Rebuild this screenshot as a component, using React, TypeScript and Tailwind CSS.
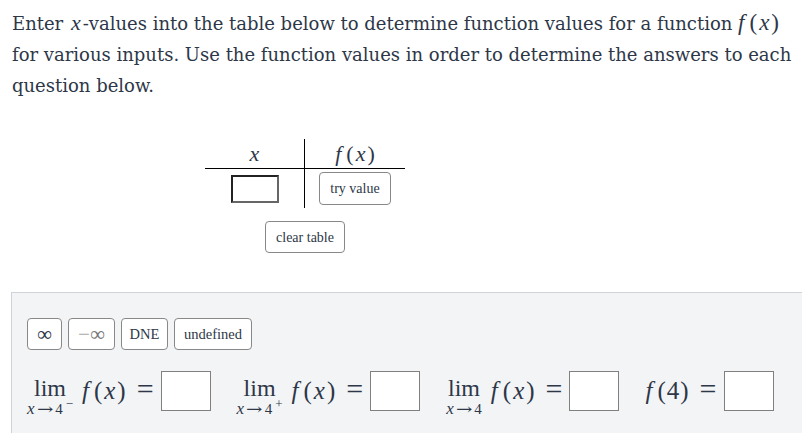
import React from "react";

const SERIF = "font-['Liberation_Serif',serif]";
const BODY = "font-['DejaVu_Serif',serif]";

function MathX() {
  return <span className={`${SERIF} italic text-[22px] leading-none px-[2px]`}>x</span>;
}

function Fx({ arg = "x", className = "" }: { arg?: string; className?: string }) {
  return (
    <span className={`${SERIF} whitespace-nowrap ${className}`}>
      <span className="italic">f</span>
      <span className="ml-[5px]">(</span>
      {arg === "x" ? <span className="italic px-[2px]">x</span> : <span className="px-[1px]">{arg}</span>}
      <span>)</span>
    </span>
  );
}

function AnswerBox() {
  return <input className="w-[50px] h-[40px] shrink-0 bg-white border border-[#808080] outline-none" />;
}

function Limit({ sup }: { sup?: string }) {
  return (
    <span className="flex flex-col items-center mt-[6px]">
      <span className="text-[24px] leading-[23px]">lim</span>
      <span className="flex items-baseline mt-[1px] text-[15px] leading-[15px] whitespace-nowrap">
        <span className="italic text-[17px] leading-[15px]">x</span>
        <span className="inline-block font-['DejaVu_Serif',serif] text-[15px] leading-[15px] mx-[4px] scale-x-[1.3]">
          →
        </span>
        <span>4</span>
        {sup && <span className="text-[13px] leading-[13px] relative -top-[6px] ml-[3px]">{sup}</span>}
      </span>
    </span>
  );
}

function Equation({ limit, sup, arg = "x" }: { limit: boolean; sup?: string; arg?: string }) {
  return (
    <div className="flex items-start">
      {limit && <Limit sup={sup} />}
      <span className={`h-[35px] leading-[35px] text-[25px] whitespace-nowrap ${limit ? "ml-[9px]" : ""}`}>
        <Fx arg={arg} />
        <span className="text-[30px] ml-[11px] mr-[7px]">=</span>
      </span>
      <AnswerBox />
    </div>
  );
}

const CHOICES = [
  { label: "∞", w: "w-[35px]" },
  { label: "−∞", w: "w-[47px]" },
  { label: "DNE", w: "w-[47px]" },
  { label: "undefined", w: "w-[78px]" },
];

export default function App() {
  return (
    <div className={`${SERIF} text-[#2d3748] bg-white w-[802px] h-[433px] overflow-hidden`}>
      <p className={`${BODY} pl-3 pr-[4px] pt-[8px] text-[18px] leading-[31px]`}>
        Enter <MathX />-values into the table below to determine function values for a function{" "}
        <Fx className="text-[23px] leading-none" /> for various inputs. Use the function values in order to
        determine the answers to each question below.
      </p>

      <div className="ml-[205px] mt-[38px] w-[200px]">
        <div className="grid grid-cols-2">
          <div className="h-[30px] flex items-center justify-center border-b border-r border-black">
            <span className="italic text-[22px]">x</span>
          </div>
          <div className="h-[30px] flex items-center justify-center text-[22px] border-b border-black">
            <Fx />
          </div>
          <div className="h-[39px] flex items-center justify-center border-r border-black">
            <input className="w-[48px] h-[28px] bg-white border-2 border-[#666] border-t-[#222] border-l-[#222] outline-none" />
          </div>
          <div className="h-[39px] flex items-center justify-center">
            <button className="h-[33px] px-[10px] rounded-[4px] border border-[#888] bg-white text-[14px]">
              try value
            </button>
          </div>
        </div>
        <div className="flex justify-center mt-[13px]">
          <button className="h-[32px] px-[10px] rounded-[4px] border border-[#888] bg-white text-[14px]">
            clear table
          </button>
        </div>
      </div>

      <div className="ml-[11px] mt-[39px] h-[200px] bg-[#f3f4f6] border-t border-l border-[#cfd2d6] pl-[15px] pt-[25px]">
        <div className="flex gap-[6px]">
          {CHOICES.map((c) => (
            <button
              key={c.label}
              className={`${c.w} h-[32px] rounded-[4px] border border-[#888] bg-white text-[14.5px] leading-none`}
            >
              {c.label === "∞" ? (
                <span className="text-[21px]">∞</span>
              ) : c.label === "−∞" ? (
                <span className="text-[21px] text-[#777]">
                  <span className="text-[#aaa]">−</span>∞
                </span>
              ) : (
                c.label
              )}
            </button>
          ))}
        </div>
        <div className="flex items-start gap-[26px] mt-[21px]">
          <Equation limit sup="−" />
          <Equation limit sup="+" />
          <Equation limit />
          <Equation limit={false} arg="4" />
        </div>
      </div>
    </div>
  );
}
